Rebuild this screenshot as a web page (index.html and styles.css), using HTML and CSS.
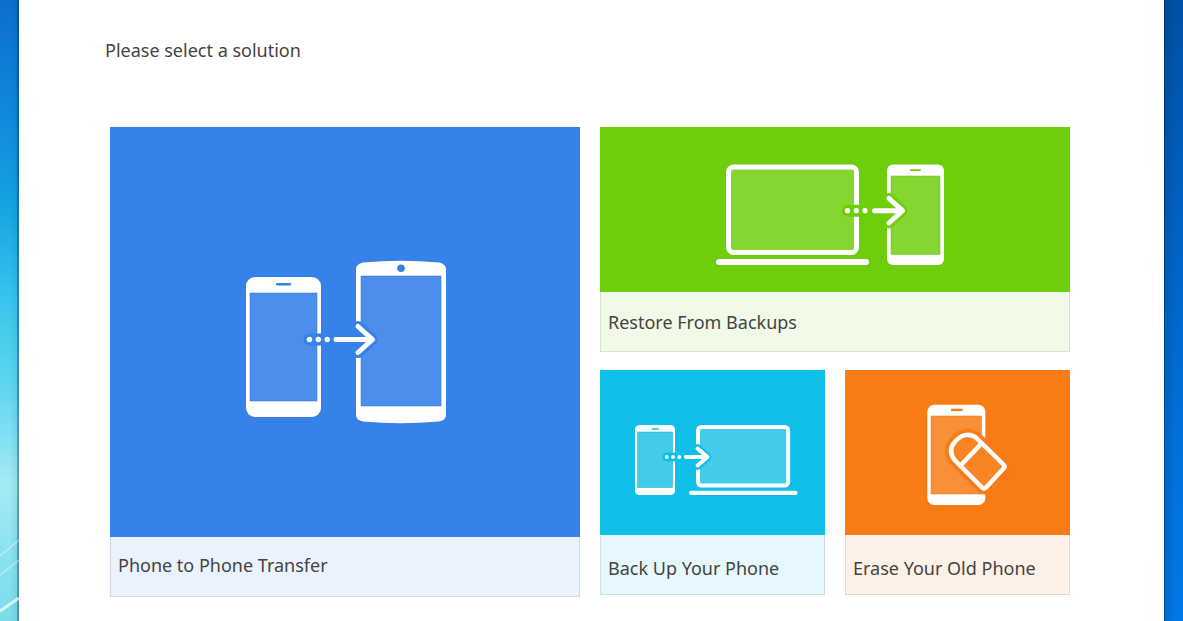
FILE: index.html
```html
<!DOCTYPE html>
<html lang="en">
<head>
<meta charset="utf-8">
<meta name="viewport" content="width=device-width, initial-scale=1">
<title>Please select a solution</title>
<link rel="stylesheet" href="styles.css">
</head>
<body>
<div class="desktop">
  <div class="wallpaper wallpaper-left">
    <svg class="streaks" width="19" height="90" viewBox="0 0 19 90" aria-hidden="true">
      <path d="M0 25L19 9M0 44L19 29" stroke="#fff" stroke-opacity=".4" stroke-width="1.5"/>
      <path d="M0 80L19 67" stroke="#fff" stroke-opacity=".7" stroke-width="3"/>
    </svg>
  </div>
  <main class="window">
    <h1 class="title">Please select a solution</h1>
    <nav class="tiles" aria-label="Solutions">
      <a class="tile blue tall" href="#transfer">
        <svg class="art" viewBox="110 127 470 410" aria-hidden="true">
          <rect class="solid" x="246" y="277" width="75" height="140" rx="9"/>
          <rect class="screen" x="250" y="293" width="67" height="108"/>
          <rect class="hole" x="276" y="283" width="15" height="2.500" rx="1"/>
          <path class="solid" d="M356 269Q356 264 363 262.500Q401 259 439 262.500Q446 264 446 269V415Q446 420 439 421.500Q401 425 363 421.500Q356 420 356 415Z"/>
          <rect class="screen" x="361" y="276" width="80" height="130"/>
          <circle class="hole" cx="401" cy="268.300" r="3.800"/>
          <path class="halo" d="M309.500 339.500H371M358 327L371.500 339.500L358 352Z"/>
          <path class="arrow" d="M336 339.500H371M358 326.500L372.500 339.500L358 352.500"/>
          <circle class="solid" cx="309.500" cy="339.500" r="2.700"/>
          <circle class="solid" cx="318.300" cy="339.500" r="2.700"/>
          <circle class="solid" cx="327.200" cy="339.500" r="2.700"/>
        </svg>
        <span class="label">Phone to Phone Transfer</span>
      </a>
      <div class="side">
        <a class="tile green wide" href="#restore">
          <svg class="art" viewBox="600 127 470 165" aria-hidden="true">
            <rect class="screen frame" x="728.500" y="167" width="128" height="85.500" rx="5"/>
            <rect class="solid" x="716" y="259" width="153" height="6" rx="3"/>
            <rect class="solid" x="887" y="164.500" width="57" height="100.500" rx="6"/>
            <rect class="screen" x="891" y="176" width="49" height="78.500"/>
            <rect class="hole" x="910" y="169.300" width="11" height="1.800" rx=".9"/>
            <path class="halo" d="M847.500 210.700H901M889 199L901.500 210.700L889 222.500Z"/>
            <path class="arrow" d="M874.500 210.700H902M889 198.500L902.500 210.700L889 223"/>
            <circle class="solid" cx="847.500" cy="210.700" r="2.600"/>
            <circle class="solid" cx="856.300" cy="210.700" r="2.600"/>
            <circle class="solid" cx="865" cy="210.700" r="2.600"/>
          </svg>
          <span class="label">Restore From Backups</span>
        </a>
        <a class="tile cyan small" href="#backup">
          <svg class="art" viewBox="600 370 225 165" aria-hidden="true">
            <rect class="solid" x="635" y="425" width="40" height="70" rx="4.500"/>
            <rect class="screen" x="637.500" y="432" width="35" height="55.500"/>
            <rect class="hole" x="651.500" y="428.300" width="7.500" height="1.500" rx=".7"/>
            <rect class="screen frame thin" x="698" y="427" width="90.200" height="58.500" rx="3.500"/>
            <rect class="solid" x="689" y="490.800" width="108.500" height="4.200" rx="2"/>
            <path class="halo thin" d="M666.700 457H707M697.500 448.500L707 457L697.500 465.500Z"/>
            <path class="arrow thin" d="M686 457H707M697.500 448.500L707.500 457L697.500 465.500"/>
            <circle class="solid" cx="666.700" cy="457" r="1.900"/>
            <circle class="solid" cx="673" cy="457" r="1.900"/>
            <circle class="solid" cx="679.300" cy="457" r="1.900"/>
          </svg>
          <span class="label">Back Up Your Phone</span>
        </a>
        <a class="tile orange small" href="#erase">
          <svg class="art" viewBox="845 370 225 165" aria-hidden="true">
            <rect class="solid" x="927.300" y="404.700" width="58" height="100.300" rx="7"/>
            <rect class="screen" x="931" y="416" width="50.500" height="78"/>
            <rect class="hole" x="951" y="408.700" width="11.500" height="2.400"/>
            <path class="halo" d="M976.500 438L1003.500 464.500Q1005.500 466.500 1003.500 468.500L986 487.500Q984 489.500 982 487.500L955 460.500Q946.500 450 956 440.500Q966.500 430.500 976.500 438Z"/>
            <path class="eraser" d="M976.500 438L1003.500 464.500Q1005.500 466.500 1003.500 468.500L986 487.500Q984 489.500 982 487.500L955 460.500Q946.500 450 956 440.500Q966.500 430.500 976.500 438ZM980.500 444.500L961 465"/>
          </svg>
          <span class="label">Erase Your Old Phone</span>
        </a>
      </div>
    </nav>
  </main>
  <div class="wallpaper wallpaper-right"></div>
</div>
</body>
</html>
```
FILE: styles.css
```css
* {
  box-sizing: border-box;
}

body {
  margin: 0;
  background: #fff;
  color: #444;
  font-family: "Noto Sans", "Open Sans", sans-serif;
}

.desktop {
  display: grid;
  grid-template-columns: 19px minmax(0, 1fr) 19px;
  min-height: 100vh;
}

.wallpaper-left {
  display: flex;
  align-items: flex-end;
  background:
    linear-gradient(90deg, transparent 50%, rgba(0, 40, 70, 0.08) 89%, rgba(0, 40, 70, 0.4) 90%),
    linear-gradient(#0a6fce 0%, #0f85da 16%, #12a2e2 32%, #36c5ec 48%, #66d9f0 64%, #a2ebf6 78%, #8ce4f3 88%, #7adcea 100%);
}

.wallpaper-right {
  background:
    linear-gradient(90deg, rgba(0, 30, 60, 0.5) 5%, rgba(0, 30, 60, 0.15) 6%, transparent 60%),
    linear-gradient(#0050a4 0%, #0061c2 35%, #0070da 70%, #0078e6 100%);
}

.window {
  padding: 36px 94px 24px 91px;
  background: #fff;
}

.title {
  margin: 0 0 62px -5px;
  font-size: 18px;
  font-weight: 400;
  line-height: 29px;
}

.tiles {
  display: grid;
  grid-template-columns: repeat(2, minmax(0, 1fr));
  align-items: start;
  gap: 20px;
}

.side {
  display: grid;
  grid-template-columns: repeat(2, minmax(0, 1fr));
  gap: 18px 20px;
}

.wide {
  grid-column: span 2;
}

.tile {
  display: flex;
  flex-direction: column;
  color: inherit;
  text-decoration: none;
}

.art {
  display: block;
  width: 100%;
  height: 165px;
  background: var(--main);
}

.tall .art {
  height: 410px;
}

.label {
  height: 60px;
  padding: 0 7px;
  border: 1px solid var(--edge);
  border-top: 0;
  background: var(--pale);
  font-size: 18px;
  line-height: 60px;
  white-space: nowrap;
}

.tall .label {
  line-height: 56px;
}

.small .label {
  line-height: 66px;
}

.blue {
  --main: #3682e8;
  --light: #4b8eeb;
  --line: #2f76d8;
  --pale: #eaf2fd;
  --edge: #d3dae6;
}

.green {
  --main: #6fce0b;
  --light: #86d631;
  --line: #68bd12;
  --pale: #f0fae7;
  --edge: #d9e2d1;
}

.cyan {
  --main: #10bfe7;
  --light: #43ccea;
  --line: #16add0;
  --pale: #e6f8fd;
  --edge: #cfe0e5;
}

.orange {
  --main: #f77c16;
  --light: #f98f38;
  --line: #ea7614;
  --pale: #fef1e8;
  --edge: #e6d9d1;
}

.solid {
  fill: #fff;
}

.screen {
  fill: var(--light);
  stroke: var(--line);
  stroke-width: 0.5;
}

.screen.frame {
  stroke: #fff;
  stroke-width: 5;
}

.screen.thin {
  stroke-width: 4;
}

.hole {
  fill: var(--main);
}

.halo,
.arrow,
.eraser {
  stroke-linecap: round;
  stroke-linejoin: round;
}

.halo {
  fill: var(--main);
  stroke: var(--main);
  stroke-width: 12;
}

.halo.thin {
  stroke-width: 9;
}

.arrow {
  fill: none;
  stroke: #fff;
  stroke-width: 5;
}

.arrow.thin {
  stroke-width: 4;
}

.eraser {
  fill: #f98423;
  stroke: #fff;
  stroke-width: 4.5;
}
```
